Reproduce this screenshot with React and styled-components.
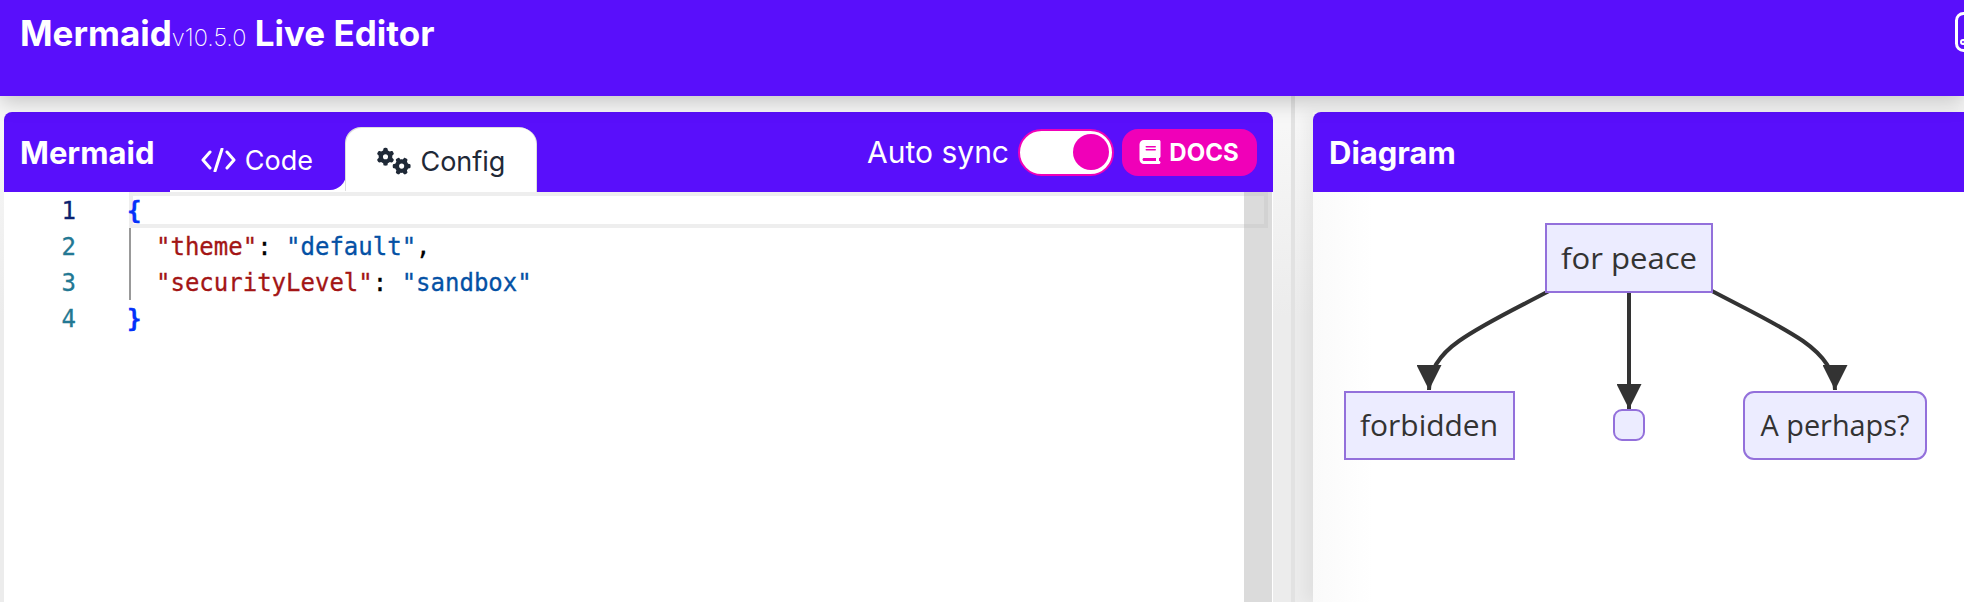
import React from "react";
import styled, { createGlobalStyle } from "styled-components";
import { FaBook, FaGears } from "react-icons/fa6";

const purple = "#590ffb";
const pink = "#f000b8";

const GlobalStyle = createGlobalStyle`
  html, body {
    margin: 0;
    padding: 0;
    height: 100%;
    overflow: hidden;
    background: #ececec;
    font-family: Inter, sans-serif;
  }
  #root {
    height: 100%;
  }
`;

function App() {
  return (
    <Page>
      <GlobalStyle />
      <Navbar>
        <Title>
          Mermaid<Version>v10.5.0</Version> Live Editor
        </Title>
        <NavIcon viewBox="0 0 40 40">
          <rect x="1.5" y="1.5" width="37" height="37" rx="7" fill="none" stroke="white" strokeWidth="3" />
          <circle cx="8" cy="30" r="2" fill="none" stroke="white" strokeWidth="2" />
        </NavIcon>
      </Navbar>
      <Content>
        <EditorPanel>
          <PanelHeader>
            <PanelTitle>Mermaid</PanelTitle>
            <Tabs>
              <Tab>
                <CodeIcon viewBox="0 0 35 24">
                  <path d="M9 4L2 12L9 20M26 4L33 12L26 20M21 1L14 23" />
                </CodeIcon>
                Code
              </Tab>
              <Tab $active>
                <FaGears size={34} />
                Config
              </Tab>
            </Tabs>
            <Controls>
              <SyncLabel>Auto sync</SyncLabel>
              <Toggle>
                <Knob />
              </Toggle>
              <DocsButton>
                <FaBook size={24} />
                DOCS
              </DocsButton>
            </Controls>
          </PanelHeader>
          <EditorBody>
            <Gutter>
              <LineNo $current>1</LineNo>
              <LineNo>2</LineNo>
              <LineNo>3</LineNo>
              <LineNo>4</LineNo>
            </Gutter>
            <CodeArea>
              <CurrentLine />
              <IndentGuide />
              <CodeLine>
                <Brace>{"{"}</Brace>
              </CodeLine>
              <CodeLine $indent>
                <Key>"theme"</Key>: <Str>"default"</Str>,
              </CodeLine>
              <CodeLine $indent>
                <Key>"securityLevel"</Key>: <Str>"sandbox"</Str>
              </CodeLine>
              <CodeLine>
                <Brace>{"}"}</Brace>
              </CodeLine>
            </CodeArea>
            <ScrollTrack />
          </EditorBody>
        </EditorPanel>
        <Divider />
        <DiagramPanel>
          <PanelHeader>
            <PanelTitle>Diagram</PanelTitle>
          </PanelHeader>
          <DiagramBody>
            <Diagram />
          </DiagramBody>
        </DiagramPanel>
      </Content>
    </Page>
  );
}

// the flowchart, coordinates relative to the diagram body top left (1313, 192)
function Diagram() {
  return (
    <DiagramSvg width="651" height="410" viewBox="0 0 651 410">
      <defs>
        <marker id="head" viewBox="0 0 10 10" refX="10" refY="5" markerUnits="userSpaceOnUse" markerWidth="25" markerHeight="25" orient="auto">
          <path d="M0 0L10 5L0 10z" fill="#333" />
        </marker>
      </defs>
      <g fill="none" stroke="#333" strokeWidth="4">
        <path d="M236 99C200 118 170 132 146 149C126 163 116 180 116 198" markerEnd="url(#head)" />
        <path d="M316 99V217" markerEnd="url(#head)" />
        <path d="M399 99C435 118 465 132 490 149C510 163 522 180 522 198" markerEnd="url(#head)" />
      </g>
      <g fill="#ececff" stroke="#9370db" strokeWidth="2">
        <rect x="233" y="32" width="166" height="68" />
        <rect x="32" y="200" width="169" height="67" />
        <rect x="301" y="218" width="30" height="30" rx="8" />
        <rect x="431" y="200" width="182" height="67" rx="10" />
      </g>
      <g fill="#333" fontFamily="'Open Sans', sans-serif" fontSize="30" textAnchor="middle">
        <text x="316" y="77" textLength="136" lengthAdjust="spacingAndGlyphs">for peace</text>
        <text x="116" y="244" textLength="138" lengthAdjust="spacingAndGlyphs">forbidden</text>
        <text x="522" y="244" textLength="149" lengthAdjust="spacingAndGlyphs">A perhaps?</text>
      </g>
    </DiagramSvg>
  );
}

const Page = styled.div`
  width: 1964px;
  height: 602px;
  overflow: hidden;
  display: flex;
  flex-direction: column;
`;

const Navbar = styled.header`
  flex: none;
  height: 96px;
  background: ${purple};
  color: white;
  display: flex;
  justify-content: space-between;
  align-items: flex-start;
  padding: 13px 0 0 20px;
  box-sizing: border-box;
  box-shadow: 0 6px 20px rgba(0, 0, 0, 0.2);
  position: relative;
  z-index: 1;
`;

const Title = styled.h1`
  margin: 0;
  font-size: 35px;
  line-height: 40px;
  font-weight: 700;
`;

const Version = styled.span`
  font-size: 23.5px;
  font-weight: 200;
`;

const NavIcon = styled.svg`
  width: 40px;
  height: 40px;
  margin-top: -1px;
  margin-right: -31px;
`;

const Content = styled.main`
  flex: 1;
  display: flex;
  padding: 16px 0 0 4px;
  min-height: 0;
  background: linear-gradient(#f7f7f7 30px, #ececec 220px);
`;

const EditorPanel = styled.section`
  flex: none;
  width: 1269px;
  display: flex;
  flex-direction: column;
`;

const DiagramPanel = styled.section`
  flex: none;
  width: 660px;
  display: flex;
  flex-direction: column;
  box-shadow: -8px 0 14px rgba(0, 0, 0, 0.05);
`;

const Divider = styled.div`
  flex: none;
  width: 4px;
  margin: -16px 18px 0;
  background: #e2e2e2;
`;

const PanelHeader = styled.div`
  flex: none;
  height: 80px;
  background: ${purple};
  border-radius: 8px 8px 0 0;
  color: white;
  display: flex;
  align-items: flex-end;
  padding-left: 16px;
  box-sizing: border-box;
`;

const PanelTitle = styled.div`
  align-self: center;
  font-size: 31px;
  font-weight: 700;
`;

const Tabs = styled.div`
  display: flex;
  align-items: flex-end;
  margin-left: 16px;
  background: linear-gradient(white, white) no-repeat bottom / 100% 24px;
`;

const Tab = styled.div`
  width: ${(p) => (p.$active ? "190px" : "176px")};
  height: ${(p) => (p.$active ? "64px" : "62px")};
  box-sizing: border-box;
  padding: ${(p) => (p.$active ? "2px 0 0" : "2px 3px 0 0")};
  display: flex;
  align-items: center;
  justify-content: center;
  gap: 9px;
  font-size: 27px;
  color: ${(p) => (p.$active ? "#1f2937" : "white")};
  background: ${(p) => (p.$active ? "white" : purple)};
  border-radius: ${(p) => (p.$active ? "16px 16px 0 0" : "0 0 16px 0")};
  box-shadow: ${(p) => (p.$active ? "1px 0 0 #ddd, -1px -1px 0 #ddd" : "none")};
  margin-bottom: ${(p) => (p.$active ? "0" : "2px")};
`;

const CodeIcon = styled.svg`
  width: 35px;
  height: 24px;
  fill: none;
  stroke: white;
  stroke-width: 3;
  stroke-linecap: round;
  stroke-linejoin: round;
`;

const Controls = styled.div`
  margin-left: auto;
  align-self: center;
  display: flex;
  align-items: center;
  padding-right: 16px;
`;

const SyncLabel = styled.span`
  font-size: 30px;
  margin-right: 9px;
`;

const Toggle = styled.div`
  width: 96px;
  height: 47px;
  box-sizing: border-box;
  border: 2px solid ${pink};
  border-radius: 24px;
  background: white;
  display: flex;
  align-items: center;
  justify-content: flex-end;
  padding-right: 3px;
  margin-right: 8px;
`;

const Knob = styled.div`
  width: 36px;
  height: 36px;
  border-radius: 50%;
  background: ${pink};
`;

const DocsButton = styled.div`
  width: 135px;
  height: 47px;
  box-sizing: border-box;
  padding-right: 2px;
  border-radius: 16px;
  background: ${pink};
  display: flex;
  align-items: center;
  justify-content: center;
  gap: 7px;
  font-size: 24px;
  font-weight: 700;
`;

const EditorBody = styled.div`
  flex: 1;
  display: flex;
  background: white;
`;

const Gutter = styled.div`
  flex: none;
  width: 121px;
  padding: 1px 49px 0 0;
  box-sizing: border-box;
  font-family: "DejaVu Sans Mono", monospace;
  font-size: 24px;
  line-height: 36px;
  text-align: right;
  -webkit-text-stroke: 0.3px currentColor;
`;

const LineNo = styled.div`
  color: ${(p) => (p.$current ? "#0b216f" : "#237893")};
`;

const CodeArea = styled.div`
  flex: 1;
  position: relative;
  padding-top: 1px;
  font-family: "DejaVu Sans Mono", monospace;
  font-size: 24px;
  line-height: 36px;
  color: #000;
  -webkit-text-stroke: 0.3px currentColor;
`;

const CurrentLine = styled.div`
  position: absolute;
  left: 4px;
  right: -24px;
  top: 0;
  height: 36px;
  box-sizing: border-box;
  border: 4px solid #eeeeee;
`;

const IndentGuide = styled.div`
  position: absolute;
  left: 4px;
  top: 36px;
  width: 2px;
  height: 72px;
  background: #999;
`;

const CodeLine = styled.div`
  position: relative;
  white-space: pre;
  padding-left: ${(p) => (p.$indent ? "31px" : "2px")};
`;

const Brace = styled.span`
  color: #0431fa;
  font-weight: 700;
`;

const Key = styled.span`
  color: #a31515;
`;

const Str = styled.span`
  color: #0451a5;
`;

const ScrollTrack = styled.div`
  flex: none;
  position: relative;
  width: 28px;
  margin-right: 1px;
  background: rgba(180, 180, 180, 0.48);
`;

const DiagramBody = styled.div`
  flex: 1;
  background: linear-gradient(90deg, #fafafa, white 60px);
`;

const DiagramSvg = styled.svg`
  display: block;
`;

export default App;
